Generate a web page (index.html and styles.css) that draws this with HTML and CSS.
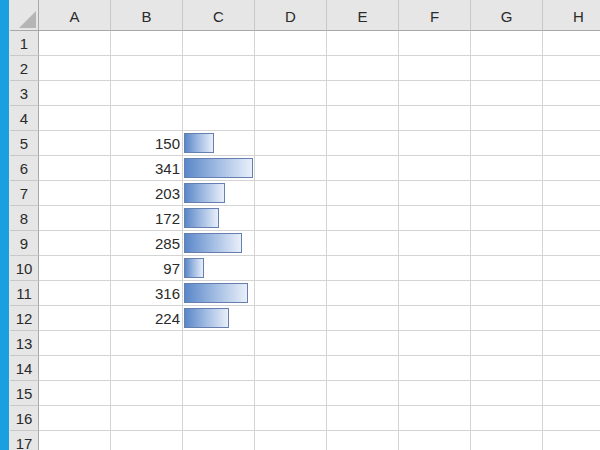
FILE: index.html
```html
<!DOCTYPE html>
<html>
<head>
<meta charset="utf-8">
<link rel="stylesheet" href="styles.css">
</head>
<body>
<div class="app">
  <div class="strip"></div>
  <div class="sheet">
    <div class="corner"><span class="tri"></span></div>
    <div class="ch">A</div><div class="ch">B</div><div class="ch">C</div><div class="ch">D</div><div class="ch">E</div><div class="ch">F</div><div class="ch">G</div><div class="ch">H</div>

    <div class="rh">1</div><div class="c"></div><div class="c"></div><div class="c"></div><div class="c"></div><div class="c"></div><div class="c"></div><div class="c"></div><div class="c"></div>
    <div class="rh">2</div><div class="c"></div><div class="c"></div><div class="c"></div><div class="c"></div><div class="c"></div><div class="c"></div><div class="c"></div><div class="c"></div>
    <div class="rh">3</div><div class="c"></div><div class="c"></div><div class="c"></div><div class="c"></div><div class="c"></div><div class="c"></div><div class="c"></div><div class="c"></div>
    <div class="rh">4</div><div class="c"></div><div class="c"></div><div class="c"></div><div class="c"></div><div class="c"></div><div class="c"></div><div class="c"></div><div class="c"></div>
    <div class="rh">5</div><div class="c"></div><div class="c num">150</div><div class="c bc"><div class="bar" style="width:30px"></div></div><div class="c"></div><div class="c"></div><div class="c"></div><div class="c"></div><div class="c"></div>
    <div class="rh">6</div><div class="c"></div><div class="c num">341</div><div class="c bc"><div class="bar" style="width:69px"></div></div><div class="c"></div><div class="c"></div><div class="c"></div><div class="c"></div><div class="c"></div>
    <div class="rh">7</div><div class="c"></div><div class="c num">203</div><div class="c bc"><div class="bar" style="width:41px"></div></div><div class="c"></div><div class="c"></div><div class="c"></div><div class="c"></div><div class="c"></div>
    <div class="rh">8</div><div class="c"></div><div class="c num">172</div><div class="c bc"><div class="bar" style="width:35px"></div></div><div class="c"></div><div class="c"></div><div class="c"></div><div class="c"></div><div class="c"></div>
    <div class="rh">9</div><div class="c"></div><div class="c num">285</div><div class="c bc"><div class="bar" style="width:58px"></div></div><div class="c"></div><div class="c"></div><div class="c"></div><div class="c"></div><div class="c"></div>
    <div class="rh">10</div><div class="c"></div><div class="c num">97</div><div class="c bc"><div class="bar" style="width:20px"></div></div><div class="c"></div><div class="c"></div><div class="c"></div><div class="c"></div><div class="c"></div>
    <div class="rh">11</div><div class="c"></div><div class="c num">316</div><div class="c bc"><div class="bar" style="width:64px"></div></div><div class="c"></div><div class="c"></div><div class="c"></div><div class="c"></div><div class="c"></div>
    <div class="rh">12</div><div class="c"></div><div class="c num">224</div><div class="c bc"><div class="bar" style="width:45px"></div></div><div class="c"></div><div class="c"></div><div class="c"></div><div class="c"></div><div class="c"></div>
    <div class="rh">13</div><div class="c"></div><div class="c"></div><div class="c"></div><div class="c"></div><div class="c"></div><div class="c"></div><div class="c"></div><div class="c"></div>
    <div class="rh">14</div><div class="c"></div><div class="c"></div><div class="c"></div><div class="c"></div><div class="c"></div><div class="c"></div><div class="c"></div><div class="c"></div>
    <div class="rh">15</div><div class="c"></div><div class="c"></div><div class="c"></div><div class="c"></div><div class="c"></div><div class="c"></div><div class="c"></div><div class="c"></div>
    <div class="rh">16</div><div class="c"></div><div class="c"></div><div class="c"></div><div class="c"></div><div class="c"></div><div class="c"></div><div class="c"></div><div class="c"></div>
    <div class="rh">17</div><div class="c"></div><div class="c"></div><div class="c"></div><div class="c"></div><div class="c"></div><div class="c"></div><div class="c"></div><div class="c"></div>
  </div>
</div>
</body>
</html>
```
FILE: styles.css
```css
html, body {
  margin: 0;
  padding: 0;
  background: #ffffff;
  overflow: hidden;
}
.app {
  display: flex;
  width: 600px;
  height: 450px;
  overflow: hidden;
}
.strip {
  flex: 0 0 9px;
  background: #1a9fe0;
  border-right: 1px solid #e6e6e6;
}
.sheet {
  display: grid;
  grid-template-columns: 29px repeat(8, 72px);
  grid-template-rows: 31px repeat(17, 25px);
  font-family: "Liberation Sans", "Noto Sans CJK JP", sans-serif;
  font-size: 15px;
  color: #2a2a2a;
}
.sheet > div {
  box-sizing: border-box;
}
.corner {
  background: #e6e6e6;
  border-right: 1px solid #a8a8a8;
  border-bottom: 1px solid #a8a8a8;
  position: relative;
}
.tri {
  position: absolute;
  right: 2px;
  bottom: 2px;
  width: 0;
  height: 0;
  border-left: 17px solid transparent;
  border-bottom: 17px solid #b5b5b5;
}
.ch {
  background: #e6e6e6;
  border-right: 1px solid #c8c8c8;
  border-bottom: 1px solid #a8a8a8;
  display: flex;
  align-items: center;
  justify-content: center;
  padding-top: 2px;
}
.rh {
  background: #e6e6e6;
  border-right: 1px solid #a8a8a8;
  border-bottom: 1px solid #c8c8c8;
  display: flex;
  align-items: center;
  justify-content: center;
  padding-top: 1px;
}
.c {
  border-right: 1px solid #d4d4d4;
  border-bottom: 1px solid #d4d4d4;
}
.num {
  display: flex;
  align-items: center;
  justify-content: flex-end;
  padding-right: 2px;
  padding-top: 1px;
}
.bc {
  padding: 2px 0 0 1px;
}
.bar {
  box-sizing: border-box;
  height: 20px;
  border: 1px solid #6580b0;
  background: linear-gradient(to right, #5a87c8 0%, #a3bde3 50%, #e9eff9 100%);
}
```
